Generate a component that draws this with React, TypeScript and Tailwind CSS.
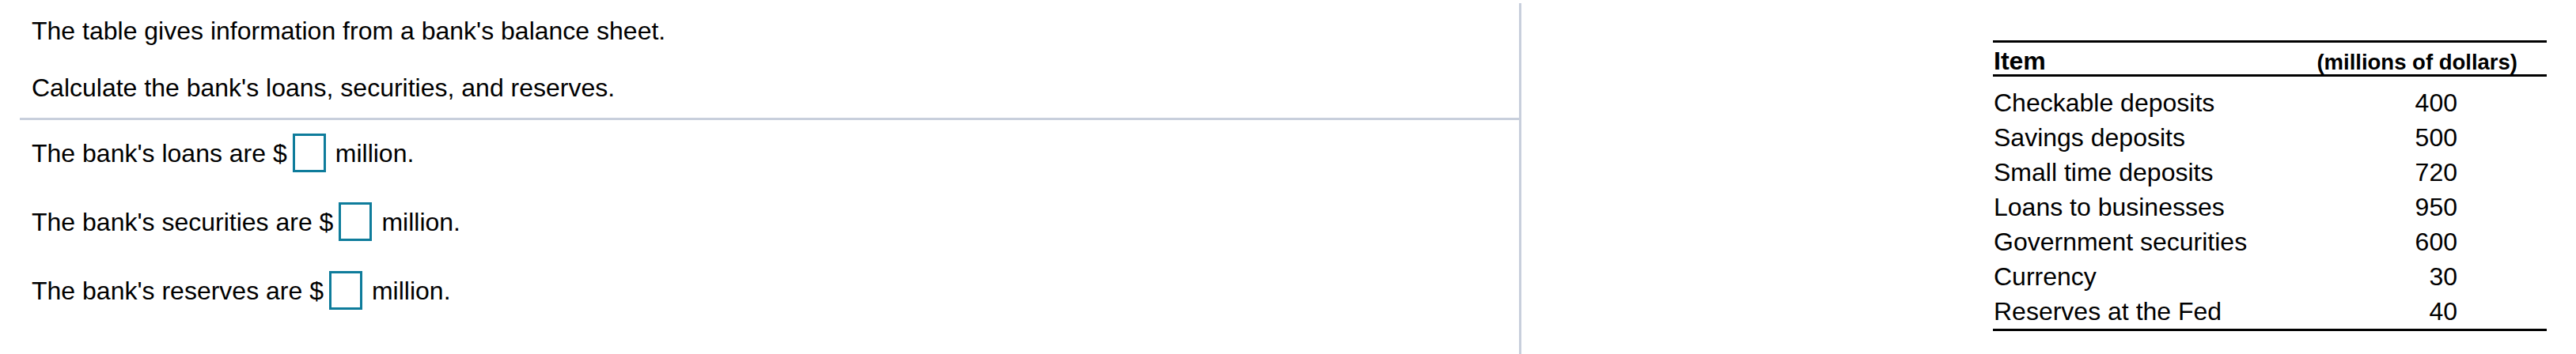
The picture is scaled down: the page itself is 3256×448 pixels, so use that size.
import React from "react";

const Box = ({ cls }: { cls: string }) => (
  <span className={`inline-block w-[42px] h-[49px] border-[3px] border-[#0e7c9b] bg-white ${cls}`} />
);

const rows: [string, string][] = [
  ["Checkable deposits", "400"],
  ["Savings deposits", "500"],
  ["Small time deposits", "720"],
  ["Loans to businesses", "950"],
  ["Government securities", "600"],
  ["Currency", "30"],
  ["Reserves at the Fed", "40"],
];

export default function App() {
  return (
    <div
      className="flex w-[3256px] h-[448px] bg-white text-black"
      style={{ fontFamily: '"Liberation Sans", Arial, sans-serif' }}
    >
      <div className="w-[1920px] shrink-0 pl-[25px] pt-[21px]">
        <div className="pl-[15px] text-[32px] leading-[36px]">
          <p>The table gives information from a bank's balance sheet.</p>
          <p className="mt-[36px]">Calculate the bank's loans, securities, and reserves.</p>
        </div>
        <div className="mt-[20px] h-[3px] bg-[#c8cfdc]" />
        <div className="pl-[15px] mt-[17px] flex flex-col gap-[38px] text-[32px] leading-[36px]">
          <div className="flex items-center h-[49px]">
            <span>The bank's loans are $</span>
            <Box cls="ml-[7px] mr-[12px]" />
            <span>million.</span>
          </div>
          <div className="flex items-center h-[49px]">
            <span>The bank's securities are $</span>
            <Box cls="ml-[7px] mr-[12px]" />
            <span>million.</span>
          </div>
          <div className="flex items-center h-[49px]">
            <span>The bank's reserves are $</span>
            <Box cls="ml-[7px] mr-[12px]" />
            <span>million.</span>
          </div>
        </div>
      </div>
      <div className="w-[3px] mt-[4px] bg-[#c8cfdc] shrink-0" />
      <div className="flex-1 pl-[596px] pt-[51px]">
        <div className="w-[700px] border-t-[3px] border-b-[3px] border-black">
          <div className="flex items-baseline justify-between pl-[1px] pt-[3px] h-[43px] leading-[40px] border-b-[3px] border-black">
            <span className="text-[32px] font-bold">Item</span>
            <span className="text-[27.5px] font-bold mr-[37px]">(millions of dollars)</span>
          </div>
          <div className="pt-[11px] pl-[1px] text-[32px] leading-[44px]">
            {rows.map(([name, val]) => (
              <div key={name} className="flex">
                <span className="flex-1">{name}</span>
                <span className="w-[120px] text-right mr-[113px]">{val}</span>
              </div>
            ))}
          </div>
        </div>
      </div>
    </div>
  );
}
